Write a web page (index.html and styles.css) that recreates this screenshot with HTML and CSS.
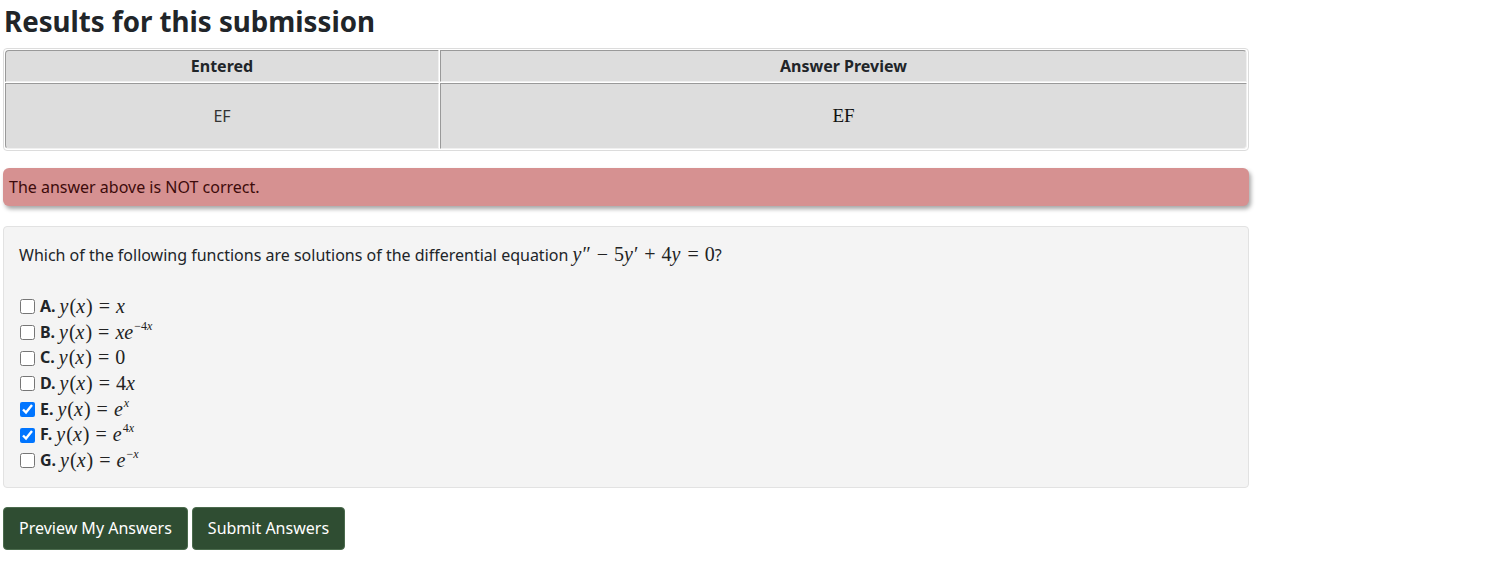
FILE: index.html
```html
<!DOCTYPE html>
<html lang="en">
<head>
<meta charset="utf-8">
<title>Results</title>
<link rel="stylesheet" href="styles.css">
</head>
<body>
<main class="page">
  <h2 class="title">Results for this submission</h2>
  <table class="results">
    <thead>
      <tr><th class="col-entered">Entered</th><th>Answer Preview</th></tr>
    </thead>
    <tbody>
      <tr><td>EF</td><td class="preview"><span class="mrm">EF</span></td></tr>
    </tbody>
  </table>

  <div class="alert">The answer above is NOT correct.</div>

  <div class="problem">
    <p class="question">Which of the following functions are solutions of the differential equation <span class="math"><i>y</i>″<span class="op">−</span>5<i>y</i>′<span class="op">+</span>4<i>y</i><span class="op">=</span>0</span>?</p>
    <ul class="choices">
      <li><input type="checkbox"><b>A.</b> <span class="math"><i>y</i>(<i>x</i>)<span class="op">=</span><i>x</i></span></li>
      <li><input type="checkbox"><b>B.</b> <span class="math"><i>y</i>(<i>x</i>)<span class="op">=</span><i>xe</i><sup>−4<i>x</i></sup></span></li>
      <li><input type="checkbox"><b>C.</b> <span class="math"><i>y</i>(<i>x</i>)<span class="op">=</span>0</span></li>
      <li><input type="checkbox"><b>D.</b> <span class="math"><i>y</i>(<i>x</i>)<span class="op">=</span>4<i>x</i></span></li>
      <li><input type="checkbox" checked><b>E.</b> <span class="math"><i>y</i>(<i>x</i>)<span class="op">=</span><i>e</i><sup><i>x</i></sup></span></li>
      <li><input type="checkbox" checked><b>F.</b> <span class="math"><i>y</i>(<i>x</i>)<span class="op">=</span><i>e</i><sup>4<i>x</i></sup></span></li>
      <li><input type="checkbox"><b>G.</b> <span class="math"><i>y</i>(<i>x</i>)<span class="op">=</span><i>e</i><sup>−<i>x</i></sup></span></li>
    </ul>
  </div>

  <div class="actions">
    <button class="btn" type="button">Preview My Answers</button>
    <button class="btn" type="button">Submit Answers</button>
  </div>
</main>
</body>
</html>
```

FILE: styles.css
```css
html, body {
  margin: 0;
  padding: 0;
  background: #fff;
}
body {
  font-family: "Noto Sans", "Open Sans", sans-serif;
  font-size: 16px;
  color: #212529;
}
.page {
  width: 1246px;
  padding: 0 3px;
}
.title {
  margin: 0 0 8px 1px;
  padding-top: 2px;
  font-size: 27.7px;
  font-weight: 700;
  line-height: 38px;
  color: #212529;
}
.results {
  width: 100%;
  border: 1px solid #dcdcdc;
  border-radius: 4px;
  border-collapse: separate;
  border-spacing: 1px;
  margin-bottom: 17px;
}
.results th,
.results td {
  background: #dddddd;
  border-top: 1px solid #999;
  border-left: 1px solid #999;
  border-bottom: 1px solid #f0f0f0;
  border-right: 1px solid #f0f0f0;
  text-align: center;
}
.results th {
  height: 30px;
  font-size: 16px;
  font-weight: 700;
  padding: 0;
}
.results td {
  height: 64px;
  font-size: 16px;
  color: #333;
  padding: 0;
}
.results th:first-child { border-top-left-radius: 4px; }
.results tr:last-child td:first-child { border-bottom-left-radius: 4px; }
.results tr:last-child td:last-child { border-bottom-right-radius: 4px; }
.results th:last-child { border-top-right-radius: 4px; }
.col-entered { width: 432px; }
.mrm {
  font-family: "Liberation Serif", "DejaVu Serif", serif;
  font-size: 19px;
  color: #111;
}
.alert {
  background: #d69191;
  color: #3d0b0b;
  border-radius: 6px;
  padding: 9px 6px 8px;
  line-height: 21px;
  box-shadow: 2px 3px 4px rgba(0,0,0,0.35);
  margin-bottom: 20px;
}
.problem {
  background: #f4f4f4;
  border: 1px solid #e2e2e2;
  border-radius: 4px;
  padding: 14px 15px 13px;
  margin-bottom: 19px;
}
.question {
  margin: 0 0 26px;
  line-height: 26px;
}
.math {
  font-family: "Liberation Serif", "DejaVu Serif", serif;
  font-size: 20px;
  color: #222;
  white-space: nowrap;
}
.math i {
  font-style: italic;
  margin-right: 1px;
}
.math .op {
  margin: 0 6px;
}
.math sup {
  font-size: 12px;
  vertical-align: 9px;
  line-height: 0;
}
.choices {
  list-style: none;
  margin: 0;
  padding: 0;
}
.choices li {
  height: 25.7px;
  line-height: 25.7px;
  display: flex;
  align-items: center;
  gap: 4px;
}
.choices input {
  margin: 0 1px 0 1px;
  width: 15px;
  height: 15px;
}
.choices b {
  font-weight: 700;
}
.actions {
  display: flex;
  gap: 4px;
}
.btn {
  font-family: "Noto Sans", "Open Sans", sans-serif;
  font-size: 16px;
  color: #fff;
  background: #2f4d32;
  border: 1px solid #4b6b4d;
  border-radius: 4px;
  height: 43px;
  padding: 0 15px;
  cursor: pointer;
}
```
